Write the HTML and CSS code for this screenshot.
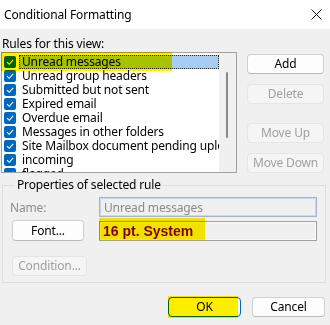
FILE: index.html
```html
<!DOCTYPE html>
<html>
<head>
<meta charset="utf-8">
<link rel="stylesheet" href="styles.css">
</head>
<body>
<div class="dialog">
  <header class="titlebar">
    <span class="title">Conditional Formatting</span>
    <svg class="close" width="11" height="11" viewBox="0 0 11 11"><path d="M0.5 0.5 L10.5 10.5 M10.5 0.5 L0.5 10.5" stroke="#1a1a1a" stroke-width="1" fill="none"/></svg>
  </header>
  <main class="content">
    <div class="rules-label">Rules for this view:</div>
    <div class="rules-row">
      <div class="listbox">
        <div class="rows">
          <div class="row selected"><span class="cb"><svg width="12" height="12" viewBox="0 0 12 12"><path d="M3 6.2 L5.2 8.3 L9.2 3.8" stroke="#fff" stroke-width="1.1" fill="none"/></svg></span><span class="item">Unread messages</span></div>
          <div class="row"><span class="cb"><svg width="12" height="12" viewBox="0 0 12 12"><path d="M3 6.2 L5.2 8.3 L9.2 3.8" stroke="#fff" stroke-width="1.1" fill="none"/></svg></span><span class="item">Unread group headers</span></div>
          <div class="row"><span class="cb"><svg width="12" height="12" viewBox="0 0 12 12"><path d="M3 6.2 L5.2 8.3 L9.2 3.8" stroke="#fff" stroke-width="1.1" fill="none"/></svg></span><span class="item">Submitted but not sent</span></div>
          <div class="row"><span class="cb"><svg width="12" height="12" viewBox="0 0 12 12"><path d="M3 6.2 L5.2 8.3 L9.2 3.8" stroke="#fff" stroke-width="1.1" fill="none"/></svg></span><span class="item">Expired email</span></div>
          <div class="row"><span class="cb"><svg width="12" height="12" viewBox="0 0 12 12"><path d="M3 6.2 L5.2 8.3 L9.2 3.8" stroke="#fff" stroke-width="1.1" fill="none"/></svg></span><span class="item">Overdue email</span></div>
          <div class="row"><span class="cb"><svg width="12" height="12" viewBox="0 0 12 12"><path d="M3 6.2 L5.2 8.3 L9.2 3.8" stroke="#fff" stroke-width="1.1" fill="none"/></svg></span><span class="item">Messages in other folders</span></div>
          <div class="row"><span class="cb"><svg width="12" height="12" viewBox="0 0 12 12"><path d="M3 6.2 L5.2 8.3 L9.2 3.8" stroke="#fff" stroke-width="1.1" fill="none"/></svg></span><span class="item">Site Mailbox document pending upload</span></div>
          <div class="row"><span class="cb"><svg width="12" height="12" viewBox="0 0 12 12"><path d="M3 6.2 L5.2 8.3 L9.2 3.8" stroke="#fff" stroke-width="1.1" fill="none"/></svg></span><span class="item">incoming</span></div>
          <div class="row"><span class="cb"><svg width="12" height="12" viewBox="0 0 12 12"><path d="M3 6.2 L5.2 8.3 L9.2 3.8" stroke="#fff" stroke-width="1.1" fill="none"/></svg></span><span class="item">flagged</span></div>
        </div>
        <div class="scrollbar"><div class="thumb"></div></div>
      </div>
      <div class="side-buttons">
        <button class="btn">Add</button>
        <button class="btn disabled">Delete</button>
        <button class="btn disabled move-up">Move Up</button>
        <button class="btn disabled">Move Down</button>
      </div>
    </div>
    <fieldset class="group">
      <legend>Properties of selected rule</legend>
      <div class="prop-row name-row">
        <span class="prop-label">Name:</span>
        <div class="field name-field">Unread messages</div>
      </div>
      <div class="prop-row font-row">
        <button class="btn font-btn">Font...</button>
        <div class="field font-preview">16 pt. System</div>
      </div>
      <div class="prop-row cond-row">
        <button class="btn disabled cond-btn">Condition...</button>
      </div>
    </fieldset>
    <div class="footer">
      <button class="btn default">OK</button>
      <button class="btn">Cancel</button>
    </div>
    <div class="marker mark-row"></div>
    <div class="marker mark-font"></div>
    <div class="marker mark-ok"></div>
  </main>
</div>
</body>
</html>
```

FILE: styles.css
```css
* { box-sizing: border-box; }
html, body { margin: 0; padding: 0; }
body {
  width: 330px;
  height: 325px;
  overflow: hidden;
  background: #f0f0f0;
  font-family: "Noto Sans", "Open Sans", sans-serif;
  font-size: 12px;
  letter-spacing: -0.15px;
  color: #000;
}
.dialog { width: 330px; height: 325px; display: flex; flex-direction: column; }
.titlebar {
  height: 29px;
  background: #fff;
  display: flex;
  align-items: center;
  justify-content: space-between;
  padding: 0 8px 0 4px;
}
.title { font-size: 12px; line-height: 16px; }
.close { display: block; }
.content { position: relative; flex: 1; }
.rules-label { margin: 7px 0 0 2px; height: 16px; line-height: 16px; }
.rules-row { display: flex; }
.listbox {
  margin-left: 1px;
  width: 236px;
  height: 121px;
  border: 1px solid #a0a0a0;
  background: #fff;
  display: flex;
  overflow: hidden;
}
.rows { width: 217px; padding-top: 2px; overflow: hidden; }
.row { height: 14px; display: flex; align-items: center; white-space: nowrap; }
.cb {
  flex: none;
  width: 12px;
  height: 12px;
  margin-left: 2px;
  background: #0067c0;
  border-radius: 2px;
  display: block;
}
.cb svg { display: block; }
.item { margin-left: 3px; padding: 0 3px; height: 14px; line-height: 14px; flex: 1; }
.selected .item { background: #a6cef2; outline: 1px dotted #222; outline-offset: -1px; }
.scrollbar { flex: 1; background: #f0f0f0; position: relative; }
.thumb { position: absolute; left: 7px; top: 19px; width: 2px; height: 66px; background: #8a8a8a; border-radius: 1px; }
.side-buttons { margin-left: 10px; width: 77px; padding-top: 2px; display: flex; flex-direction: column; gap: 10px; }
.move-up { margin-top: 9px; }
.btn {
  font-family: inherit;
  font-size: 12px;
  letter-spacing: inherit;
  height: 20px;
  padding: 0;
  background: #fdfdfd;
  border: 1px solid #d0d0d0;
  border-bottom-color: #b8b8b8;
  border-radius: 4px;
  color: #000;
  line-height: 16px;
}
.btn.disabled { background: #f5f5f5; border-color: #e5e5e5; color: #a0a0a0; }
.group {
  margin: 4px 0 0 2px;
  width: 324px;
  height: 106px;
  border: 1px solid #dcdcdc;
  padding: 0 0 0 7px;
  min-width: 0;
}
.group legend { margin-left: 5px; padding: 0 2px; line-height: 16px; }
.prop-row { display: flex; align-items: center; }
.name-row { margin-top: 4px; height: 20px; }
.prop-label { width: 89px; color: #8c8c8c; }
.field { width: 218px; height: 20px; display: flex; align-items: center; padding-left: 4px; }
.name-field { border: 1px solid #a8b4c6; box-shadow: inset 0 0 0 1px #cbd9ec; color: #8a8a8a; background: #f0f0f0; }
.font-row { margin-top: 3px; height: 21px; }
.font-btn { margin-left: 2px; width: 72px; height: 21px; }
.font-preview {
  margin-left: 15px;
  border: 1px solid #a0a0a0;
  box-shadow: inset 0 0 0 1px #fafafa;
  background: #f0f0f0;
  font-family: "Liberation Sans", Arial, sans-serif;
  font-weight: bold;
  font-size: 14px;
  letter-spacing: 0;
  color: #800000;
  padding-left: 3px;
}
.cond-row { margin-top: 15px; }
.cond-btn { margin-left: 2px; width: 75px; }
.footer { display: flex; justify-content: flex-end; gap: 11px; padding-right: 5px; margin-top: 14px; }
.footer .btn { width: 73px; }
.btn.default { border: 1px solid #0067c0; }
.marker { position: absolute; background: #fff000; mix-blend-mode: multiply; }
.mark-row { left: 1px; top: 23px; width: 171px; height: 19px; }
.mark-font { left: 99px; top: 189px; width: 106px; height: 22px; }
.mark-ok { left: 168px; top: 267px; width: 70px; height: 22px; }
```
